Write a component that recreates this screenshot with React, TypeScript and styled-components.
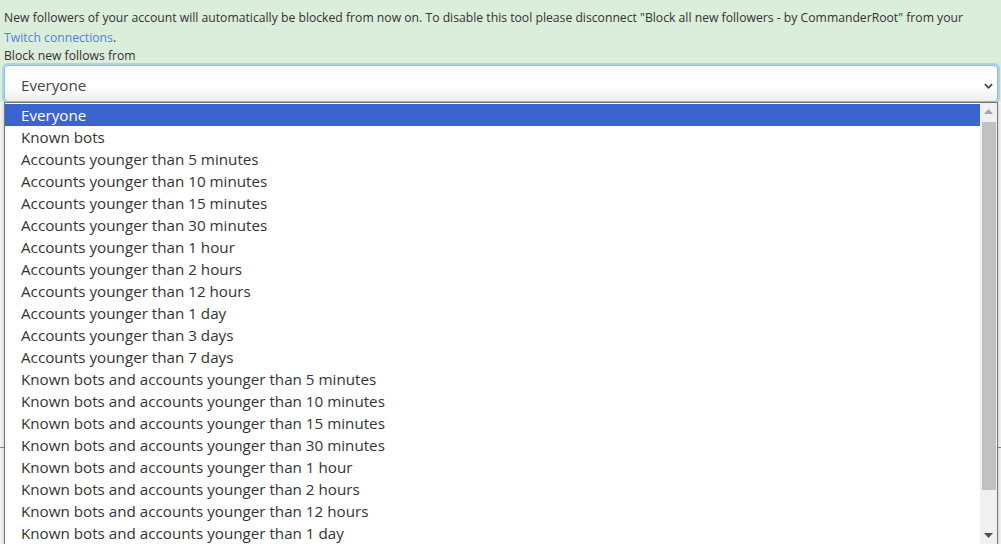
import React from "react";
import styled, { createGlobalStyle } from "styled-components";

const GlobalStyle = createGlobalStyle`
  html, body {
    margin: 0;
    padding: 0;
    background: #f4f4f4;
    font-family: "Open Sans", "Noto Sans", sans-serif;
    color: #333;
  }
`;

const options = [
  "Everyone",
  "Known bots",
  "Accounts younger than 5 minutes",
  "Accounts younger than 10 minutes",
  "Accounts younger than 15 minutes",
  "Accounts younger than 30 minutes",
  "Accounts younger than 1 hour",
  "Accounts younger than 2 hours",
  "Accounts younger than 12 hours",
  "Accounts younger than 1 day",
  "Accounts younger than 3 days",
  "Accounts younger than 7 days",
  "Known bots and accounts younger than 5 minutes",
  "Known bots and accounts younger than 10 minutes",
  "Known bots and accounts younger than 15 minutes",
  "Known bots and accounts younger than 30 minutes",
  "Known bots and accounts younger than 1 hour",
  "Known bots and accounts younger than 2 hours",
  "Known bots and accounts younger than 12 hours",
  "Known bots and accounts younger than 1 day",
  "Known bots and accounts younger than 3 days",
  "Known bots and accounts younger than 7 days",
];

export default function App() {
  return (
    <Page>
      <GlobalStyle />
      <Alert>
        <Message>
          New followers of your account will automatically be blocked from now on. To disable this tool please
          disconnect "Block all new followers - by CommanderRoot" from your <a href="#">Twitch connections</a>.
        </Message>
        <Label>Block new follows from</Label>
        <SelectWrap>
          <SelectBox>
            <span>Everyone</span>
            <Chevron viewBox="0 0 10 6">
              <path d="M1 1l4 4 4-4" />
            </Chevron>
          </SelectBox>
          <Dropdown>
            <OptionList>
              {options.map((o, i) => (
                <Option key={o} $selected={i === 0}>
                  {o}
                </Option>
              ))}
            </OptionList>
            <ScrollBar>
              <ScrollArrow viewBox="0 0 9 5">
                <path d="M0 5L4.5 0 9 5z" />
              </ScrollArrow>
              <Track>
                <Thumb />
              </Track>
              <ScrollArrow viewBox="0 0 9 5">
                <path d="M0 0h9L4.5 5z" />
              </ScrollArrow>
            </ScrollBar>
          </Dropdown>
        </SelectWrap>
      </Alert>
      <Content>
        <Divider />
      </Content>
    </Page>
  );
}

const Page = styled.div`
  height: 544px;
  overflow: hidden;
`;

const Alert = styled.div`
  background: #dbeddb;
  padding: 8px 3px 0 4px;
  font-size: 12.2px;
  line-height: 19.5px;
`;

const Message = styled.p`
  margin: 0;
  a {
    color: #4f7ef0;
    text-decoration: none;
  }
`;

const Label = styled.div`
  line-height: 18px;
`;

const SelectWrap = styled.div`
  position: relative;
`;

const SelectBox = styled.div`
  height: 37px;
  box-sizing: border-box;
  display: flex;
  align-items: center;
  justify-content: space-between;
  padding: 4px 4px 0 16px;
  background: linear-gradient(#fff 60%, #eeeeee);
  border: 1px solid #80bdff;
  border-radius: 4px;
  box-shadow: 0 0 0 2px rgba(120, 180, 240, 0.45);
  font-size: 15.2px;
  color: #444;
`;

const Chevron = styled.svg`
  width: 9px;
  height: 6px;
  fill: none;
  stroke: #444;
  stroke-width: 2;
`;

const Dropdown = styled.div`
  position: absolute;
  top: 37px;
  left: 0;
  right: 0;
  height: 450px;
  display: flex;
  background: #fff;
  border: 1px solid #767676;
  box-shadow: 0 2px 4px rgba(0, 0, 0, 0.2);
  overflow: hidden;
`;

const OptionList = styled.div`
  flex: 1;
  padding-top: 1px;
`;

const Option = styled.div<{ $selected?: boolean }>`
  height: 22px;
  line-height: 22px;
  padding-left: 16px;
  font-size: 15.2px;
  white-space: nowrap;
  color: ${(p) => (p.$selected ? "#fff" : "#333")};
  background: ${(p) => (p.$selected ? "#3b65cc" : "transparent")};
`;

const ScrollBar = styled.div`
  width: 17px;
  background: #f0f0f0;
  display: flex;
  flex-direction: column;
  align-items: center;
  height: 441px;
`;

const ScrollArrow = styled.svg`
  width: 9px;
  height: 5px;
  fill: #a3a3a3;
  margin: 6px 0;
  &:last-child {
    fill: #505050;
  }
`;

const Track = styled.div`
  flex: 1;
  align-self: stretch;
  padding: 2px 1px 0 2px;
`;

const Thumb = styled.div`
  height: 368px;
  background: #c1c1c1;
`;

const Content = styled.div`
  padding-top: 345px;
`;

const Divider = styled.div`
  height: 1px;
  background: #888;
`;
